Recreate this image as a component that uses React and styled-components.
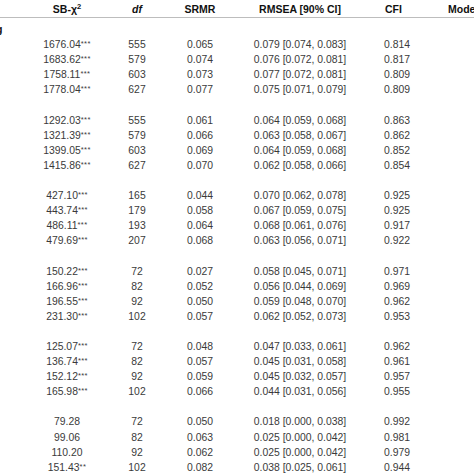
import React from "react";
import styled, { createGlobalStyle } from "styled-components";

const GlobalStyle = createGlobalStyle`
    html, body {
        margin: 0;
        padding: 0;
        background: #ffffff;
        overflow: hidden;
    }
    body {
        font-family: "Liberation Sans", Arial, Helvetica, sans-serif;
    }
`;

const COLS = "30px 74px 66px 60px 140px 54px 120px";

const Page = styled.div`
    width: 474px;
    height: 474px;
    overflow: hidden;
    background: #fff;
`;

const Table = styled.div`
    width: 544px;
    display: flex;
    flex-direction: column;
`;

const HeaderRow = styled.div`
    display: grid;
    grid-template-columns: ${COLS};
    height: 16px;
    align-items: center;
    border-bottom: 1.5px solid #bdbdbd;
    font-weight: bold;
    font-size: 10.5px;
    color: #111;
    padding-top: 1px;
    box-sizing: content-box;
`;

const Body = styled.div`
    display: flex;
    flex-direction: column;
    padding-top: 4px;
`;

const Row = styled.div`
    display: grid;
    grid-template-columns: ${COLS};
    height: 15.1px;
    line-height: 15.1px;
    font-size: 10.4px;
    color: #3a3a3a;
    white-space: nowrap;
`;

const Cell = styled.div`
    text-align: ${p => p.$align || "center"};
    padding-left: ${p => p.$pad || 0}px;
    white-space: nowrap;
    font-style: ${p => (p.$italic ? "italic" : "normal")};
`;

const Label = styled.div`
    font-weight: bold;
    color: #111;
    font-size: 10.5px;
    margin-left: -4px;
`;

const Stars = styled.sup`
    font-size: 7.5px;
    vertical-align: 2px;
    line-height: 0;
    letter-spacing: 0.4px;
`;

const Sq = styled.sup`
    font-size: 7.5px;
    vertical-align: 4px;
    line-height: 0;
`;

const groups = [
    {
        label: "g",
        rows: [
            ["1676.04", "***", "555", "0.065", "0.079 [0.074, 0.083]", "0.814"],
            ["1683.62", "***", "579", "0.074", "0.076 [0.072, 0.081]", "0.817"],
            ["1758.11", "***", "603", "0.073", "0.077 [0.072, 0.081]", "0.809"],
            ["1778.04", "***", "627", "0.077", "0.075 [0.071, 0.079]", "0.809"]
        ]
    },
    {
        label: "",
        rows: [
            ["1292.03", "***", "555", "0.061", "0.064 [0.059, 0.068]", "0.863"],
            ["1321.39", "***", "579", "0.066", "0.063 [0.058, 0.067]", "0.862"],
            ["1399.05", "***", "603", "0.069", "0.064 [0.059, 0.068]", "0.852"],
            ["1415.86", "***", "627", "0.070", "0.062 [0.058, 0.066]", "0.854"]
        ]
    },
    {
        label: "",
        rows: [
            ["427.10", "***", "165", "0.044", "0.070 [0.062, 0.078]", "0.925"],
            ["443.74", "***", "179", "0.058", "0.067 [0.059, 0.075]", "0.925"],
            ["486.11", "***", "193", "0.064", "0.068 [0.061, 0.076]", "0.917"],
            ["479.69", "***", "207", "0.068", "0.063 [0.056, 0.071]", "0.922"]
        ]
    },
    {
        label: "",
        rows: [
            ["150.22", "***", "72", "0.027", "0.058 [0.045, 0.071]", "0.971"],
            ["166.96", "***", "82", "0.052", "0.056 [0.044, 0.069]", "0.969"],
            ["196.55", "***", "92", "0.050", "0.059 [0.048, 0.070]", "0.962"],
            ["231.30", "***", "102", "0.057", "0.062 [0.052, 0.073]", "0.953"]
        ]
    },
    {
        label: "",
        rows: [
            ["125.07", "***", "72", "0.048", "0.047 [0.033, 0.061]", "0.962"],
            ["136.74", "***", "82", "0.057", "0.045 [0.031, 0.058]", "0.961"],
            ["152.12", "***", "92", "0.059", "0.045 [0.032, 0.057]", "0.957"],
            ["165.98", "***", "102", "0.066", "0.044 [0.031, 0.056]", "0.955"]
        ]
    },
    {
        label: "",
        rows: [
            ["79.28", "", "72", "0.050", "0.018 [0.000, 0.038]", "0.992"],
            ["99.06", "", "82", "0.063", "0.025 [0.000, 0.042]", "0.981"],
            ["110.20", "", "92", "0.062", "0.025 [0.000, 0.042]", "0.979"],
            ["151.43", "**", "102", "0.082", "0.038 [0.025, 0.061]", "0.944"]
        ]
    }
];

function Header() {
    return (
        <HeaderRow>
            <Cell />
            <Cell>
                SB-χ<Sq>2</Sq>
            </Cell>
            <Cell $italic>df</Cell>
            <Cell>SRMR</Cell>
            <Cell>RMSEA [90% CI]</Cell>
            <Cell $align="left" $pad={15}>
                CFI
            </Cell>
            <Cell $align="left" $pad={24}>
                Model
            </Cell>
        </HeaderRow>
    );
}

export default function App() {
    return (
        <Page>
            <GlobalStyle />
            <Table>
                <Header />
                <Body>
                    {groups.map((g, gi) => (
                        <React.Fragment key={gi}>
                            <Row>
                                <Label>{g.label}</Label>
                            </Row>
                            {g.rows.map((r, ri) => (
                                <Row key={ri}>
                                    <Cell />
                                    <Cell>
                                        {r[0]}
                                        {r[1] && <Stars>{r[1]}</Stars>}
                                    </Cell>
                                    <Cell>{r[2]}</Cell>
                                    <Cell>{r[3]}</Cell>
                                    <Cell>{r[4]}</Cell>
                                    <Cell $align="left" $pad={14}>
                                        {r[5]}
                                    </Cell>
                                    <Cell />
                                </Row>
                            ))}
                        </React.Fragment>
                    ))}
                </Body>
            </Table>
        </Page>
    );
}
